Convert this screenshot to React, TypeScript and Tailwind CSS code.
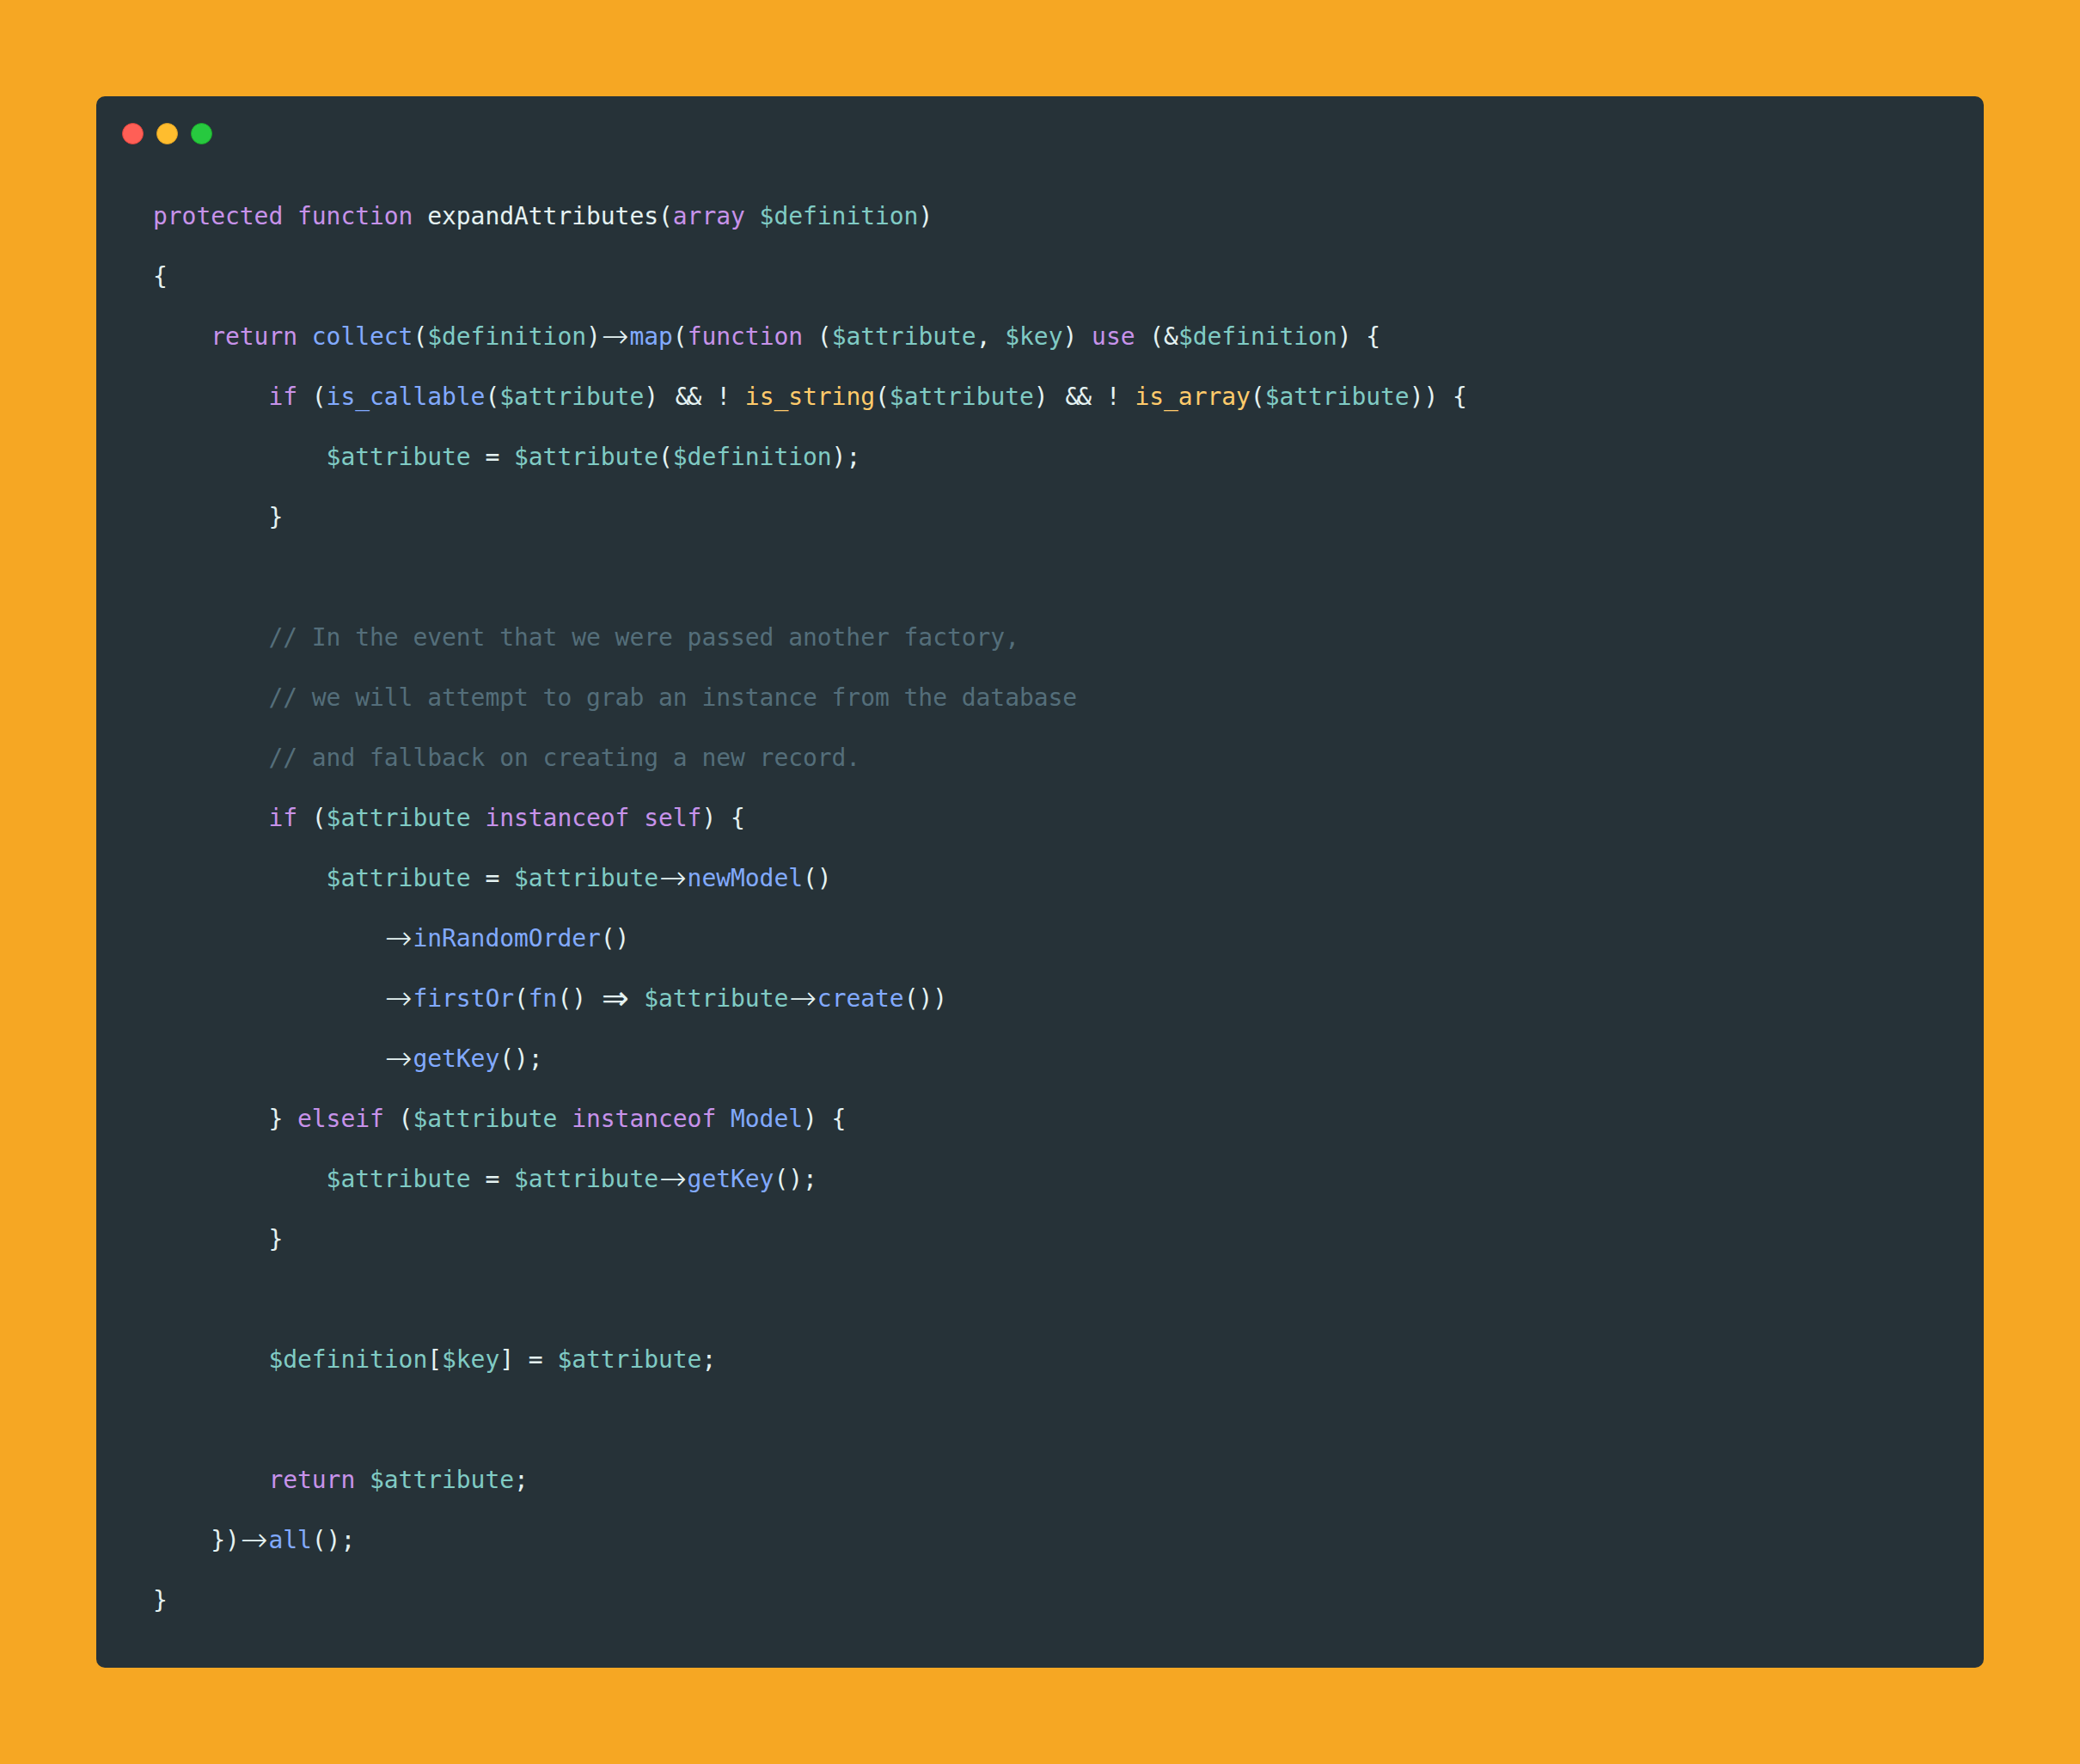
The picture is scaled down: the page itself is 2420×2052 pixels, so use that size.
const k = "text-[#c792ea]";
const f = "text-[#82aaff]";
const v = "text-[#80cbc4]";
const y = "text-[#ffcb6b]";
const w = "text-[#e4f2f2]";
const c = "text-[#546e7a]";

type Token = [string, string];

const arrow = (glyph: string) => (
  <span className="inline-flex w-[33.6px] justify-center align-[-3px] font-['DejaVu_Sans'] text-[38px] font-extralight leading-none text-[#e4f2f2]">
    <span>{glyph}</span>
  </span>
);

const amps = (
  <span className="inline-block w-[33.6px] text-center tracking-[-3px] text-[#e4f2f2]">&amp;&amp;</span>
);

// "->", "=>" and "&&" are drawn as one glyph in the reference font
const LINES: (Token | "arrow" | "fat" | "amps")[][] = [
  [[k, "protected function "], [w, "expandAttributes("], [k, "array "], [v, "$definition"], [w, ")"]],
  [[w, "{"]],
  [[k, "    return "], [f, "collect"], [w, "("], [v, "$definition"], [w, ")"], "arrow", [f, "map"], [w, "("], [k, "function "], [w, "("], [v, "$attribute"], [w, ", "], [v, "$key"], [w, ") "], [k, "use "], [w, "(&"], [v, "$definition"], [w, ") {"]],
  [[k, "        if "], [w, "("], [f, "is_callable"], [w, "("], [v, "$attribute"], [w, ") "], "amps", [w, " ! "], [y, "is_string"], [w, "("], [v, "$attribute"], [w, ") "], "amps", [w, " ! "], [y, "is_array"], [w, "("], [v, "$attribute"], [w, ")) {"]],
  [[v, "            $attribute "], [w, "= "], [v, "$attribute"], [w, "("], [v, "$definition"], [w, ");"]],
  [[w, "        }"]],
  [],
  [[c, "        // In the event that we were passed another factory,"]],
  [[c, "        // we will attempt to grab an instance from the database"]],
  [[c, "        // and fallback on creating a new record."]],
  [[k, "        if "], [w, "("], [v, "$attribute "], [k, "instanceof self"], [w, ") {"]],
  [[v, "            $attribute "], [w, "= "], [v, "$attribute"], "arrow", [f, "newModel"], [w, "()"]],
  [[w, "                "], "arrow", [f, "inRandomOrder"], [w, "()"]],
  [[w, "                "], "arrow", [f, "firstOr"], [w, "("], [f, "fn"], [w, "() "], "fat", [w, " "], [v, "$attribute"], "arrow", [f, "create"], [w, "())"]],
  [[w, "                "], "arrow", [f, "getKey"], [w, "();"]],
  [[w, "        } "], [k, "elseif "], [w, "("], [v, "$attribute "], [k, "instanceof "], [f, "Model"], [w, ") {"]],
  [[v, "            $attribute "], [w, "= "], [v, "$attribute"], "arrow", [f, "getKey"], [w, "();"]],
  [[w, "        }"]],
  [],
  [[v, "        $definition"], [w, "["], [v, "$key"], [w, "] = "], [v, "$attribute"], [w, ";"]],
  [],
  [[k, "        return "], [v, "$attribute"], [w, ";"]],
  [[w, "    })"], "arrow", [f, "all"], [w, "();"]],
  [[w, "}"]],
];

export default function App() {
  return (
    <div className="min-h-screen bg-[#f6a723] p-[112px]">
      <div className="h-[1828px] rounded-[10px] bg-[#263238] pl-[66px] pt-[31px]">
        <div className="-ml-[36px] flex gap-[15px]">
          <span className="h-[25px] w-[25px] rounded-full border border-[#e0443e] bg-[#ff5f56]" />
          <span className="h-[25px] w-[25px] rounded-full border border-[#dea123] bg-[#ffbd2e]" />
          <span className="h-[25px] w-[25px] rounded-full border border-[#1aab29] bg-[#27c93f]" />
        </div>
        <pre className="mt-[49px] font-['DejaVu_Sans_Mono',monospace] text-[28px] leading-[70px] tracking-[-0.058px]">
          {LINES.map((line, i) => (
            <div key={i} className="h-[70px]">
              {line.map((t, j) =>
                t === "arrow" ? (
                  <span key={j}>{arrow("→")}</span>
                ) : t === "fat" ? (
                  <span key={j}>{arrow("⇒")}</span>
                ) : t === "amps" ? (
                  <span key={j}>{amps}</span>
                ) : (
                  <span key={j} className={t[0]}>
                    {t[1]}
                  </span>
                )
              )}
            </div>
          ))}
        </pre>
      </div>
    </div>
  );
}
